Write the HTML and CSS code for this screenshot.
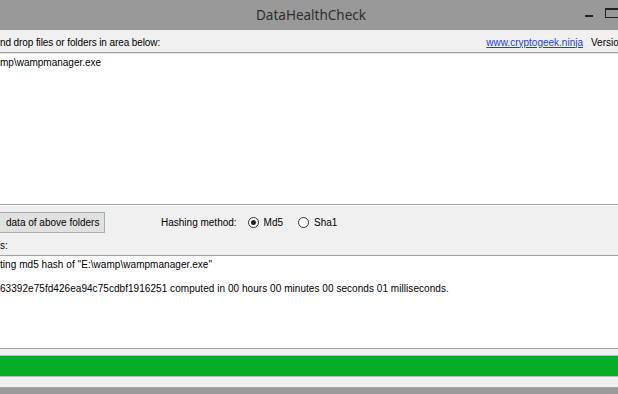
FILE: index.html
```html
<!DOCTYPE html>
<html lang="en">
<head>
    <meta charset="UTF-8">
    <title>DataHealthCheck</title>
    <link rel="stylesheet" href="styles.css">
</head>
<body>
    <div class="window">
        <!-- Title bar -->
        <div class="titlebar">
            <span class="title">DataHealthCheck</span>
            <div class="controls">
                <span class="btn-min"></span>
                <span class="btn-max"></span>
            </div>
        </div>

        <!-- Drop hint + link -->
        <div class="topbar">
            <span class="hint">nd drop files or folders in area below:</span>
            <a class="site-link" href="#">www.cryptogeek.ninja</a>
            <span class="version">Versio</span>
        </div>

        <!-- Drop area -->
        <div class="drop-area">
            <div class="line">mp\wampmanager.exe</div>
        </div>

        <!-- Actions -->
        <div class="actions">
            <button class="run-btn">data of above folders</button>
            <div class="hashing">
                <span class="label">Hashing method:</span>
                <span class="radio checked"></span>
                <span class="opt">Md5</span>
                <span class="radio"></span>
                <span class="opt">Sha1</span>
            </div>
        </div>
        <div class="status-label">s:</div>

        <!-- Log -->
        <div class="log">
            <div class="line">ting md5 hash of "E:\wamp\wampmanager.exe"</div>
            <div class="line gap">63392e75fd426ea94c75cdbf1916251 computed in 00 hours 00 minutes 00 seconds 01 milliseconds.</div>
        </div>

        <!-- Progress -->
        <div class="progress-wrap">
            <div class="progress">
                <div class="progress-fill" style="width: 100%"></div>
            </div>
        </div>
        <div class="bottom-edge"></div>
    </div>
</body>
</html>
```

FILE: styles.css
```css
/* General Styles */
html, body {
    margin: 0;
    padding: 0;
    overflow: hidden;
}

body {
    font-family: "Liberation Sans", Arial, sans-serif;
    font-size: 10px;
    color: #000;
    background: #f0f0f0;
}

.window {
    width: 618px;
    height: 394px;
    display: flex;
    flex-direction: column;
    background: #f0f0f0;
}

/* Title bar */
.titlebar {
    height: 30px;
    flex: none;
    background: #999999;
    display: flex;
    align-items: center;
    justify-content: center;
    position: relative;
}

.title {
    font-family: "Noto Sans", "Open Sans", sans-serif;
    font-size: 13.5px;
    color: #2e2e2e;
    margin-left: 4px;
}

.controls {
    position: absolute;
    right: 0;
    top: 0;
    height: 30px;
    display: flex;
    align-items: center;
    gap: 12px;
}

.btn-min {
    width: 8px;
    height: 2px;
    background: #222;
    margin-top: 2px;
}

.btn-max {
    width: 12px;
    height: 7px;
    border: 1px solid #222;
    border-top-width: 2px;
    margin-top: -5px;
    margin-right: -1px;
}

/* Top bar */
.topbar {
    height: 23px;
    flex: none;
    display: flex;
    align-items: center;
    padding-top: 2px;
    box-sizing: border-box;
    border-bottom: 1px solid #a0a0a0;
}

.hint {
    flex: 1;
    letter-spacing: -0.1px;
}

.site-link {
    color: #1c3fd6;
    text-decoration: underline;
    margin-right: 8px;
    margin-left: -3px;
}

.version {
    width: 27px;
    overflow: hidden;
    white-space: nowrap;
}

/* Drop area */
.drop-area {
    height: 152px;
    flex: none;
    background: #fff;
    border-top: 1px solid #e3e3e3;
    border-bottom: 1px solid #a0a0a0;
    box-sizing: border-box;
    padding-top: 3px;
}

.line {
    white-space: nowrap;
    line-height: 12px;
}

/* Actions row */
.actions {
    height: 32px;
    flex: none;
    display: flex;
    align-items: center;
    border-top: 1px solid #fff;
    box-sizing: border-box;
}

.run-btn {
    height: 21px;
    width: 105px;
    margin-top: 2px;
    padding: 0 0 0 6px;
    text-align: left;
    font-family: inherit;
    font-size: 10px;
    color: #000;
    background: #e1e1e1;
    border: 1px solid #adadad;
    border-left: none;
    white-space: nowrap;
}

.hashing {
    display: flex;
    align-items: center;
    margin-left: 56px;
    margin-top: 2px;
}

.hashing .label {
    margin-right: 11px;
}

.radio {
    width: 11px;
    height: 11px;
    border: 1px solid #333;
    border-radius: 50%;
    box-sizing: border-box;
    background: #fff;
    display: flex;
    align-items: center;
    justify-content: center;
    margin-right: 5px;
}

.radio.checked::after {
    content: "";
    width: 5px;
    height: 5px;
    border-radius: 50%;
    background: #222;
}

.opt {
    margin-right: 15px;
}

.status-label {
    height: 19px;
    flex: none;
    line-height: 18px;
    border-bottom: 1px solid #a0a0a0;
    box-sizing: border-box;
}

/* Log */
.log {
    height: 93px;
    flex: none;
    background: #fff;
    border-bottom: 1px solid #a0a0a0;
    box-sizing: border-box;
    padding-top: 3px;
    letter-spacing: 0.05px;
}

.log .gap {
    margin-top: 12px;
}

/* Progress */
.progress-wrap {
    height: 39px;
    flex: none;
    padding-top: 6px;
    box-sizing: border-box;
    border-bottom: 1px solid #a8a8a8;
}

.progress {
    height: 22px;
    border-top: 1px solid #bcbcbc;
    border-bottom: 1px solid #bcbcbc;
    box-sizing: border-box;
    background: #e6e6e6;
}

.progress-fill {
    height: 100%;
    background: #06ae25;
}

.bottom-edge {
    flex: 1;
    background: #999999;
}
```
